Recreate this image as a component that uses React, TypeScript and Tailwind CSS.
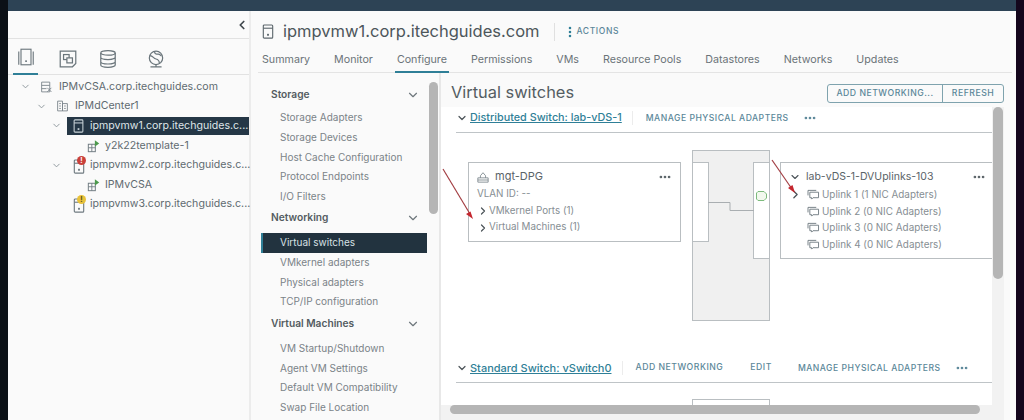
import { ChevronDown, ChevronLeft, ChevronRight, MoreHorizontal, MoreVertical } from "lucide-react";
import type { ReactNode } from "react";

const HostIcon = ({ className = "" }: { className?: string }) => (
  <svg viewBox="0 0 12 16" className={className} fill="none" stroke="currentColor" strokeWidth="1.2">
    <rect x="1" y="1" width="10" height="14" rx="1" />
    <path d="M1 4.5h10" />
    <rect x="5" y="10.5" width="2" height="2" fill="currentColor" stroke="none" />
  </svg>
);

const VmIcon = () => (
  <svg viewBox="0 0 16 16" className="w-[14px] h-[14px]" fill="none">
    <rect x="1.5" y="6" width="8" height="8.5" stroke="#6f7a80" strokeWidth="1.1" />
    <path d="M5.5 6v8.5M1.5 10h8" stroke="#6f7a80" strokeWidth="1" />
    <path d="M9 1.5l5 3.5-5 3.5z" fill="#4c9a4c" />
  </svg>
);

const AlertHost = ({ badge }: { badge: string }) => (
  <span className="relative w-[14px] h-[16px] block">
    <HostIcon className="w-[12px] h-[15px] text-[#6f7a80] mt-[2px]" />
    <span className={`absolute -top-[1px] left-[4px] w-[9px] h-[9px] rounded-full flex items-center justify-center text-[7px] leading-none font-bold ${badge}`}>
      !
    </span>
  </span>
);

const TreeRow = ({
  indent,
  inset,
  iconBox,
  chevron,
  icon,
  label,
  selected,
}: {
  indent: string;
  inset: string;
  iconBox: string;
  chevron?: boolean;
  icon: ReactNode;
  label: string;
  selected?: boolean;
}) => (
  <div className={`flex items-center h-[19.6px] ${indent}`}>
    <span className="w-[16px] shrink-0 text-[#8a9499]">{chevron && <ChevronDown size={11} />}</span>
    <div className={`flex-1 min-w-0 flex items-center h-[18px] ${inset} ${selected ? "bg-[#253746] text-[#dfe5e8]" : "text-[#5f6a70]"}`}>
      <span className={`shrink-0 flex items-center ${iconBox}`}>{icon}</span>
      <span className="whitespace-nowrap">{label}</span>
    </div>
  </div>
);

const NavHeader = ({ label }: { label: string }) => (
  <div className="flex items-center justify-between h-[20px] pl-[10px] pr-[7px] font-semibold text-[#545c61] text-[10.2px]">
    {label}
    <ChevronDown size={14} className="text-[#6e777c]" />
  </div>
);

const NavItem = ({ label, selected }: { label: string; selected?: boolean }) => (
  <div
    className={`flex items-center h-[19.7px] text-[10px] ${
      selected ? "bg-[#22333f] text-[#d7e0e4] border-l-2 border-[#2f7f97] pl-[17px]" : "text-[#7b8388] pl-[19px]"
    }`}
  >
    {label}
  </div>
);

const UplinkIcon = () => (
  <svg viewBox="0 0 14 12" className="w-[13px] h-[11px] shrink-0" fill="none" stroke="#6f7a80" strokeWidth="1">
    <path d="M1 7V1.500h9" />
    <path d="M3 3.500h9.500v6H6.500L5 11V9.500H3z" />
  </svg>
);

const Uplink = ({ label, open }: { label: string; open?: boolean }) => (
  <div className="flex items-center h-[16.7px] text-[9.9px] text-[#868e93]">
    <span className="w-[18px] shrink-0 text-[#4b5358]">{open && <ChevronRight size={13} strokeWidth={2.4} />}</span>
    <UplinkIcon />
    <span className="ml-[2px] whitespace-nowrap">{label}</span>
  </div>
);

const tabs = ["Summary", "Monitor", "Configure", "Permissions", "VMs", "Resource Pools", "Datastores", "Networks", "Updates"];

export default function App() {
  return (
    <div className="relative w-[1024px] h-[420px] overflow-hidden flex bg-[#0b0f14] font-['Inter','Noto_Sans',sans-serif]">
      <div className="w-[8px] shrink-0 bg-[#0b1016]" />
      <div className="w-[1008px] shrink-0 flex flex-col">
        <div className="h-[11px] shrink-0 bg-[#2d4355]" />
        <div className="flex-1 min-h-0 flex bg-[#fafafa]">
          {/* LEFT */}
          <aside className="w-[243px] shrink-0 border-r-2 border-[#ececec] text-[10.6px]">
            <div className="h-[28px] flex items-center justify-end border-b border-[#e2e2e2]">
              <ChevronLeft size={14} strokeWidth={3} className="text-[#40484d]" />
            </div>
            <div className="flex h-[36px] border-b border-[#e2e2e2] pl-[5px] text-[#6a757b]">
              <div className="w-[25px] border-b-2 border-[#2f7f97] h-[36px] pt-[2px] flex items-center justify-center">
                <svg viewBox="0 0 18 18" className="w-[20px] h-[20px]" fill="none" stroke="currentColor" strokeWidth="1">
                  <rect x="4.500" y="2" width="9" height="14" />
                  <path d="M2.500 4v12M15.500 4v12" />
                  <rect x="8.300" y="12" width="1.500" height="1.500" fill="currentColor" stroke="none" />
                </svg>
              </div>
              <div className="ml-[20px] h-[36px] pt-[4px] flex items-center">
                <svg viewBox="0 0 18 18" className="w-[20px] h-[20px]" fill="none" stroke="currentColor" strokeWidth="1.100">
                  <path d="M2 2h14v11l-3 3H2z" />
                  <rect x="5" y="5" width="5" height="4.500" />
                  <rect x="8" y="8" width="5" height="4.500" fill="#fafafa" />
                </svg>
              </div>
              <div className="ml-[20px] h-[36px] pt-[4px] flex items-center">
                <svg viewBox="0 0 18 18" className="w-[20px] h-[20px]" fill="none" stroke="currentColor" strokeWidth="1.100">
                  <ellipse cx="9" cy="3.500" rx="6.500" ry="2" />
                  <path d="M2.500 3.500v11c0 1.100 3 2 6.500 2s6.500-.9 6.500-2v-11M2.500 7.500c0 1.100 3 2 6.500 2s6.500-.9 6.500-2M2.500 11.500c0 1.100 3 2 6.500 2s6.500-.9 6.500-2" />
                </svg>
              </div>
              <div className="ml-[28px] h-[36px] pt-[4px] flex items-center">
                <svg viewBox="0 0 18 18" className="w-[20px] h-[20px]" fill="none" stroke="currentColor" strokeWidth="1.100">
                  <circle cx="9" cy="8" r="6" />
                  <path d="M3.500 6c3 0 3 2.500 5.500 3s3 2 3 4M8 2.200c-1 2 1.500 2.500 3 2.500s2 1 3 1.500M4 16h10M9 14v2" />
                </svg>
              </div>
            </div>
            <div className="pt-[2px]">
              <TreeRow
                indent="pl-[12px]"
                inset="pl-[4px]"
                iconBox="w-[19px]"
                chevron
                label="IPMvCSA.corp.itechguides.com"
                icon={
                  <svg viewBox="0 0 16 16" className="w-[13px] h-[14px]" fill="none" stroke="#7a858b" strokeWidth="1.100">
                    <path d="M2 2h10v12H2zM2 6h10M2 10h6M9 9l5 5M14 9l-5 5" />
                  </svg>
                }
              />
              <TreeRow
                indent="pl-[28px]"
                inset="pl-[4px]"
                iconBox="w-[19px]"
                chevron
                label="IPMdCenter1"
                icon={
                  <svg viewBox="0 0 16 16" className="w-[13px] h-[14px]" fill="none" stroke="#7a858b" strokeWidth="1.100">
                    <path d="M2 2h6v12H2zM8 5h6v9H8zM4 5h2M4 8h2M4 11h2M10 8h2M10 11h2" />
                  </svg>
                }
              />
              <TreeRow indent="pl-[43px]" inset="pl-[6px]" iconBox="w-[17px]" chevron selected label="ipmpvmw1.corp.itechguides.c..." icon={<HostIcon className="w-[11px] h-[14px] text-[#c9d3d8]" />} />
              <TreeRow indent="pl-[59px]" inset="pl-[4px]" iconBox="w-[18px]" label="y2k22template-1" icon={<VmIcon />} />
              <TreeRow indent="pl-[43px]" inset="pl-[6px]" iconBox="w-[17px]" chevron label="ipmpvmw2.corp.itechguides.c..." icon={<AlertHost badge="bg-[#c9403a] text-white" />} />
              <TreeRow indent="pl-[59px]" inset="pl-[4px]" iconBox="w-[18px]" label="IPMvCSA" icon={<VmIcon />} />
              <TreeRow indent="pl-[43px]" inset="pl-[6px]" iconBox="w-[17px]" label="ipmpvmw3.corp.itechguides.c..." icon={<AlertHost badge="bg-[#e8c13a] text-[#4d4d20]" />} />
            </div>
          </aside>

          {/* RIGHT */}
          <main className="flex-1 min-w-0 flex flex-col">
            <div className="h-[38px] shrink-0 flex items-center pl-[11px] pt-[3px]">
              <HostIcon className="w-[12px] h-[15px] text-[#5d676d]" />
              <h1 className="ml-[9px] text-[16.5px] leading-none text-[#4d565b] whitespace-nowrap">ipmpvmw1.corp.itechguides.com</h1>
              <span className="ml-[14px] w-px h-[18px] bg-[#e0e0e0]" />
              <MoreVertical size={14} strokeWidth={2.4} className="ml-[8px] text-[#2f7f97]" />
              <span className="text-[8.5px] font-medium tracking-[0.6px] text-[#5b8799]">ACTIONS</span>
            </div>
            <div className="h-[24px] shrink-0 flex gap-[24px] ml-[7px] mr-[4px] pl-[4px] text-[10.7px] text-[#6a7378] border-b border-[#e4e4e4] whitespace-nowrap">
              {tabs.map((t) => (
                <div key={t} className={`h-[24px] pt-[3px] ${t === "Configure" ? "border-b-2 border-[#2f7f97] -mx-[2px] px-[2px]" : ""}`}>
                  {t}
                </div>
              ))}
            </div>

            <div className="flex-1 min-h-0 flex">
              {/* config nav */}
              <nav className="w-[166px] shrink-0 ml-[10px] pt-[12px] overflow-hidden">
                <NavHeader label="Storage" />
                <div className="mt-[3px]">
                  <NavItem label="Storage Adapters" />
                  <NavItem label="Storage Devices" />
                  <NavItem label="Host Cache Configuration" />
                  <NavItem label="Protocol Endpoints" />
                  <NavItem label="I/O Filters" />
                </div>
                <div className="mt-[1.5px]">
                  <NavHeader label="Networking" />
                </div>
                <div className="mt-[5px]">
                  <NavItem label="Virtual switches" selected />
                  <NavItem label="VMkernel adapters" />
                  <NavItem label="Physical adapters" />
                  <NavItem label="TCP/IP configuration" />
                </div>
                <div className="mt-[2px]">
                  <NavHeader label="Virtual Machines" />
                </div>
                <div className="mt-[5px]">
                  <NavItem label="VM Startup/Shutdown" />
                  <NavItem label="Agent VM Settings" />
                  <NavItem label="Default VM Compatibility" />
                  <NavItem label="Swap File Location" />
                </div>
              </nav>
              <div className="w-[14px] shrink-0 pt-[9px] pl-[2px] border-r-2 border-[#e8e8e8]">
                <div className="w-[9px] h-[132px] rounded-full bg-[#b5b5b5]" />
              </div>

              {/* content */}
              <section className="flex-1 min-w-0 flex flex-col">
                <div className="h-[34px] shrink-0 flex items-center justify-between pl-[10px] pr-[12px] pt-[7px]">
                  <h2 className="text-[16.4px] -mt-[3px] text-[#545d62]">Virtual switches</h2>
                  <div className="flex h-[19px] border border-[#7fa3ae] rounded-[3px] text-[8.7px] font-medium tracking-[0.5px] text-[#5b8799]">
                    <span className="w-[115px] flex items-center justify-center border-r border-[#7fa3ae]">ADD NETWORKING...</span>
                    <span className="w-[60px] flex items-center justify-center">REFRESH</span>
                  </div>
                </div>
                <div className="flex-1 min-h-0 flex">
                  <div className="w-[551px] shrink-0 overflow-hidden flex flex-col">
                    <div className="h-[298px] shrink-0 bg-white overflow-hidden pl-[15px]">
                      <div className="h-[26px] pb-[3px] flex items-center border-b border-[#bfc4c7]">
                        <ChevronDown size={12} strokeWidth={2.4} className="text-[#4b5358] shrink-0" />
                        <a className="ml-[2px] text-[10.8px] font-medium text-[#2f7f97] underline whitespace-nowrap">Distributed Switch: lab-vDS-1</a>
                        <span className="ml-[10px] w-px h-[14px] bg-[#ececec]" />
                        <span className="ml-[13px] text-[8.6px] font-medium tracking-[0.5px] text-[#5b8799] whitespace-nowrap">MANAGE PHYSICAL ADAPTERS</span>
                        <MoreHorizontal size={14} strokeWidth={2.6} className="ml-[14px] text-[#5b8799]" />
                      </div>
                      <div className="flex items-start ml-[12px] pt-[17px] w-[620px]">
                        <div className="w-[213px] h-[80px] mt-[12px] shrink-0 border border-[#b9bec1] px-[8px] pt-[5px] text-[9.8px] text-[#868e93]">
                          <div className="flex items-center justify-between h-[17px]">
                            <div className="flex items-center gap-[6px] text-[11px] text-[#5a6368]">
                              <svg viewBox="0 0 14 14" className="w-[12px] h-[12px]" fill="none" stroke="#7a858b" strokeWidth="1">
                                <path d="M1 13V8h12v5zM4 8V5.500L7 2l3 3.500V8M1 10.500h12" />
                              </svg>
                              mgt-DPG
                            </div>
                            <MoreHorizontal size={14} strokeWidth={2.6} className="text-[#5a6368]" />
                          </div>
                          <div className="h-[18px] flex items-center">VLAN ID: --</div>
                          <div className="h-[16.5px] flex items-center"><ChevronRight size={12} strokeWidth={2.4} className="text-[#4b5358]" />VMkernel Ports (1)</div>
                          <div className="h-[16.5px] flex items-center"><ChevronRight size={12} strokeWidth={2.4} className="text-[#4b5358]" />Virtual Machines (1)</div>
                        </div>
                        <div className="relative ml-[11px] w-[78px] h-[171px] shrink-0 border border-[#b9bec1] bg-[#f0f0f0]">
                          <div className="absolute left-[-1px] top-[11px] w-[17px] h-[80px] border border-[#b9bec1] bg-white" />
                          <div className="absolute right-[-1px] top-[11px] w-[17px] h-[97px] border border-[#b9bec1] bg-white flex items-start justify-center pt-[28px]">
                            <svg viewBox="0 0 11 10" className="w-[11px] h-[10px]" fill="#f2f8ee" stroke="#7dbb7d" strokeWidth="1">
                              <path d="M2 .5h6l2.500 2.500v4L8 9.500H2L.5 8V2z" />
                            </svg>
                          </div>
                          <svg viewBox="0 0 46 20" className="absolute left-[15px] top-[50px] w-[46px] h-[20px]" fill="none" stroke="#a9aeb1">
                            <path d="M0 1.500h22v8h24" />
                          </svg>
                        </div>
                        <div className="ml-[10px] w-[214px] h-[97px] mt-[12px] shrink-0 border border-[#b9bec1] px-[8px] pt-[5px]">
                          <div className="flex items-center h-[17px] text-[10.5px] text-[#5a6368] whitespace-nowrap">
                            <ChevronDown size={12} strokeWidth={2.2} className="text-[#4b5358] mr-[5px]" />
                            lab-vDS-1-DVUplinks-103
                            <MoreHorizontal size={14} strokeWidth={2.6} className="ml-auto mr-[-1px]" />
                          </div>
                          <div className="mt-[1px]">
                            <Uplink open label="Uplink 1 (1 NIC Adapters)" />
                            <Uplink label="Uplink 2 (0 NIC Adapters)" />
                            <Uplink label="Uplink 3 (0 NIC Adapters)" />
                            <Uplink label="Uplink 4 (0 NIC Adapters)" />
                          </div>
                        </div>
                      </div>
                      <div className="mt-[36px] h-[26px] pb-[3px] flex items-center border-b border-[#bfc4c7]">
                        <ChevronDown size={12} strokeWidth={2.4} className="text-[#4b5358] shrink-0" />
                        <a className="ml-[2px] text-[11px] font-medium text-[#2f7f97] underline whitespace-nowrap">Standard Switch: vSwitch0</a>
                        <span className="ml-[11px] w-px h-[14px] bg-[#ececec]" />
                        <span className="ml-[12px] text-[8.7px] font-medium tracking-[0.5px] text-[#5b8799] whitespace-nowrap">ADD NETWORKING</span>
                        <span className="ml-[27px] text-[8.7px] font-medium tracking-[0.5px] text-[#5b8799]">EDIT</span>
                        <span className="ml-[26px] text-[8.6px] font-medium tracking-[0.5px] text-[#5b8799] whitespace-nowrap">MANAGE PHYSICAL ADAPTERS</span>
                        <MoreHorizontal size={14} strokeWidth={2.6} className="ml-[14px] text-[#5b8799]" />
                      </div>
                      <div className="ml-[236px] mt-[16px] w-[78px] h-[10px] border border-[#b9bec1] bg-white" />
                    </div>
                    <div className="h-[15px] shrink-0 bg-[#f2f2f2] pl-[9px]">
                      <div className="w-[530px] h-[9px] rounded-full bg-[#b5b5b5]" />
                    </div>
                  </div>
                  <div className="w-[12px] shrink-0 bg-[#f2f2f2] pl-[1px]">
                    <div className="w-[10px] h-[172px] rounded-full bg-[#b5b5b5]" />
                  </div>
                </div>
              </section>
            </div>
          </main>
        </div>
      </div>
      <div className="w-[8px] shrink-0 bg-[#14061c]" />

      {/* annotation arrows */}
      <svg className="absolute left-0 top-0 w-[1024px] h-[420px] pointer-events-none" viewBox="0 0 1024 420" fill="none">
        <path d="M443 169L470 214" stroke="#a33f44" strokeWidth="1.200" />
        <path d="M473 219l-7-5 4.500-2.500z" fill="#c4262e" />
        <path d="M772 160L792 189" stroke="#a33f44" strokeWidth="1.200" />
        <path d="M795 193l-7-5 4.500-3z" fill="#c4262e" />
      </svg>
    </div>
  );
}
